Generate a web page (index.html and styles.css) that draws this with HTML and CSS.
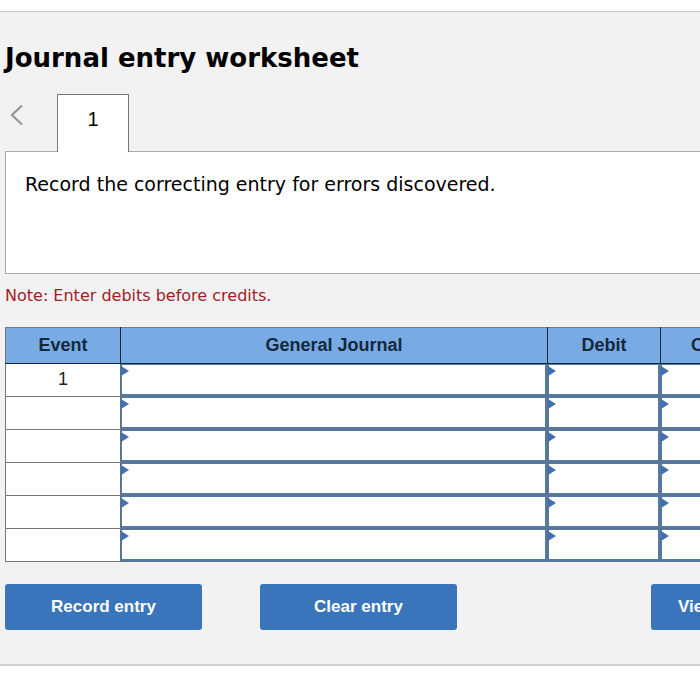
FILE: index.html
```html
<!DOCTYPE html>
<html lang="en">
<head>
  <meta charset="utf-8">
  <title>Journal entry worksheet</title>
  <link rel="stylesheet" href="styles.css">
</head>
<body>
  <main class="worksheet">
    <div class="content">
      <h1>Journal entry worksheet</h1>

      <nav class="tabs">
        <button class="prev" type="button" aria-label="Previous">
          <svg width="13" height="22" viewBox="0 0 13 22"><path d="M12 1.5 2 11 12 20.5" fill="none" stroke="#999" stroke-width="2.4"/></svg>
        </button>
        <button class="tab" type="button">1</button>
      </nav>

      <div class="panel">
        <p>Record the correcting entry for errors discovered.</p>
      </div>

      <p class="note">Note: Enter debits before credits.</p>

      <table class="journal">
        <thead>
          <tr><th class="event">Event</th><th>General Journal</th><th class="amount">Debit</th><th class="amount">Credit</th></tr>
        </thead>
        <tbody>
          <tr>
            <td class="number">1</td>
            <td class="entry"><input type="text" aria-label="General Journal, row 1"></td>
            <td class="entry"><input type="text" aria-label="Debit, row 1"></td>
            <td class="entry"><input type="text" aria-label="Credit, row 1"></td>
          </tr>
          <tr>
            <td class="number"></td>
            <td class="entry"><input type="text" aria-label="General Journal, row 2"></td>
            <td class="entry"><input type="text" aria-label="Debit, row 2"></td>
            <td class="entry"><input type="text" aria-label="Credit, row 2"></td>
          </tr>
          <tr>
            <td class="number"></td>
            <td class="entry"><input type="text" aria-label="General Journal, row 3"></td>
            <td class="entry"><input type="text" aria-label="Debit, row 3"></td>
            <td class="entry"><input type="text" aria-label="Credit, row 3"></td>
          </tr>
          <tr>
            <td class="number"></td>
            <td class="entry"><input type="text" aria-label="General Journal, row 4"></td>
            <td class="entry"><input type="text" aria-label="Debit, row 4"></td>
            <td class="entry"><input type="text" aria-label="Credit, row 4"></td>
          </tr>
          <tr>
            <td class="number"></td>
            <td class="entry"><input type="text" aria-label="General Journal, row 5"></td>
            <td class="entry"><input type="text" aria-label="Debit, row 5"></td>
            <td class="entry"><input type="text" aria-label="Credit, row 5"></td>
          </tr>
          <tr>
            <td class="number"></td>
            <td class="entry"><input type="text" aria-label="General Journal, row 6"></td>
            <td class="entry"><input type="text" aria-label="Debit, row 6"></td>
            <td class="entry"><input type="text" aria-label="Credit, row 6"></td>
          </tr>
        </tbody>
      </table>

      <div class="actions">
        <button class="btn" type="button">Record entry</button>
        <button class="btn" type="button">Clear entry</button>
        <button class="btn view" type="button">View general journal</button>
      </div>
    </div>
  </main>
</body>
</html>
```

FILE: styles.css
```css
* {
  box-sizing: border-box;
}

body {
  background: #fff;
  color: #000;
  font: 19px/24px Verdana, "DejaVu Sans", sans-serif;
  margin: 11px 0 20px;
  overflow-x: hidden;
}

.worksheet {
  background: #f2f2f2;
  border-top: 1px solid #c4c4c4;
  border-bottom: 2px solid #d0d0d0;
  overflow: hidden;
  padding: 30px 0 34px 5px;
}

/* the sheet is wider than the window and gets clipped on the right */
.content {
  width: calc(100% + 74px);
}

h1 {
  font-size: 26px;
  line-height: 32px;
  margin: 0 0 20px;
}

p {
  margin: 0;
}

.tabs {
  align-items: flex-start;
  display: flex;
}

.prev {
  background: none;
  border: 0;
  height: 42px;
  padding: 0 0 0 5px;
  text-align: left;
  width: 52px;
}

.prev svg {
  display: block;
}

.tab {
  background: #fff;
  border: 1px solid #777;
  border-bottom: 0;
  color: #000;
  font: 20px/24px "Liberation Sans", Arial, sans-serif;
  height: 58px;
  margin-bottom: -1px;
  padding: 0 0 10px;
  position: relative;
  width: 72px;
}

.panel {
  background: #fff;
  border: 1px solid #aaa;
  min-height: 123px;
  padding: 20px 19px;
}

.note {
  color: #a32024;
  font-size: 16px;
  line-height: 20px;
  margin: 12px 0 21px;
}

.journal {
  background: #fff;
  border-collapse: collapse;
  font: 18px/24px "Liberation Sans", Arial, sans-serif;
  table-layout: fixed;
  width: 100%;
}

.journal th {
  background: #78abe4;
  border: 1px solid #14283c;
  border-top-color: #777;
  color: #14283c;
  height: 36px;
  padding: 0 0 2px;
}

.journal th:first-child {
  border-left-color: #777;
}

.journal .event {
  width: 115px;
}

.journal .amount {
  width: 113px;
}

.journal td {
  border: 1px solid #777;
  color: #222;
  height: 33px;
  padding: 0;
  text-align: center;
}

.journal .number {
  border-right-color: #5d7389;
  padding-bottom: 2px;
}

.journal .entry {
  border-color: #5d7389;
  position: relative;
}

.entry input {
  background: #fff;
  border: solid #557aa5;
  border-width: 1px 2px 2px 1px;
  border-radius: 0;
  display: block;
  font: inherit;
  height: 32px;
  padding: 0 10px;
  width: 100%;
}

.entry::before {
  border: solid transparent;
  border-width: 5px 0 5px 8px;
  border-left-color: #416fb0;
  content: "";
  left: 0;
  position: absolute;
  top: 2px;
}

.actions {
  display: flex;
  gap: 58px;
  margin-top: 22px;
}

.btn {
  background: #3a75bb;
  border: 0;
  border-radius: 3px;
  color: #fff;
  flex: none;
  font: bold 17px/24px "Liberation Sans", Arial, sans-serif;
  height: 46px;
  width: 197px;
}

.view {
  margin-left: 136px;
  padding: 0 27px;
  width: auto;
}
```
